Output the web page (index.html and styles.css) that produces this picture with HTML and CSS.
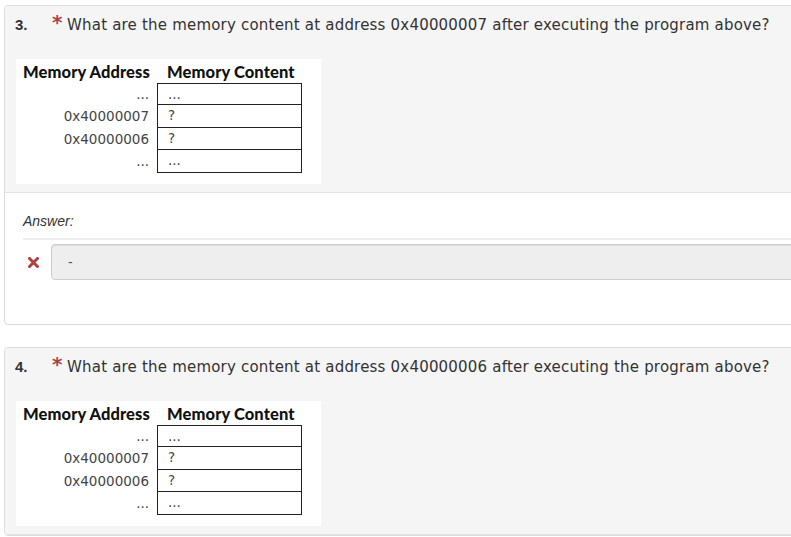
FILE: index.html
```html
<!DOCTYPE html>
<html>
<head>
<meta charset="utf-8">
<link rel="stylesheet" href="styles.css">
</head>
<body>
<div class="page">
  <div class="card">
    <div class="card-head">
      <div class="qline">
        <span class="qnum">3.</span>
        <span class="req">*</span>
        <span class="qtext">What are the memory content at address 0x40000007 after executing the program above?</span>
      </div>
      <div class="memfig">
        <div class="mh addr">Memory Address</div>
        <div class="mh cont">Memory Content</div>
        <div class="ma">...</div><div class="mc first">...</div>
        <div class="ma">0x40000007</div><div class="mc">?</div>
        <div class="ma">0x40000006</div><div class="mc">?</div>
        <div class="ma">...</div><div class="mc">...</div>
      </div>
    </div>
    <div class="card-body">
      <div class="answer-label">Answer:</div>
      <div class="answer-row">
        <span class="wrong"><svg width="11" height="11" viewBox="0 0 11 11"><path d="M1.5 1.5 L9.5 9.5 M9.5 1.5 L1.5 9.5" stroke="#b0413e" stroke-width="3" stroke-linecap="square"/></svg></span>
        <div class="answer-box">-</div>
      </div>
    </div>
  </div>

  <div class="card">
    <div class="card-head">
      <div class="qline">
        <span class="qnum">4.</span>
        <span class="req">*</span>
        <span class="qtext">What are the memory content at address 0x40000006 after executing the program above?</span>
      </div>
      <div class="memfig">
        <div class="mh addr">Memory Address</div>
        <div class="mh cont">Memory Content</div>
        <div class="ma">...</div><div class="mc first">...</div>
        <div class="ma">0x40000007</div><div class="mc">?</div>
        <div class="ma">0x40000006</div><div class="mc">?</div>
        <div class="ma">...</div><div class="mc">...</div>
      </div>
    </div>
  </div>
</div>
</body>
</html>
```

FILE: styles.css
```css
html, body {
  margin: 0;
  padding: 0;
  background: #fff;
  overflow: hidden;
}
.page {
  width: 791px;
  height: 537px;
  overflow: hidden;
  padding: 5px 0 0 4px;
  box-sizing: border-box;
}
.card {
  width: 820px;
  border: 1px solid #ddd;
  border-radius: 4px;
  background: #fff;
  margin-bottom: 22px;
  overflow: hidden;
}
.card-head {
  background: #f5f5f5;
  border-bottom: 1px solid #e3e3e3;
  padding: 5px 0 8px 10px;
}
.qline {
  display: flex;
  align-items: baseline;
  font-family: "DejaVu Sans", Verdana, sans-serif;
  font-size: 15px;
  color: #333;
  height: 24px;
}
.qnum {
  font-family: "Liberation Sans", Arial, sans-serif;
  font-weight: bold;
  font-size: 15px;
  width: 37px;
}
.req {
  color: #a94442;
  font-size: 20px;
  font-weight: bold;
  width: 15px;
  position: relative;
  top: -1px;
}
.qtext {
  letter-spacing: 0.2px;
}
.memfig {
  margin-top: 24px;
  margin-left: 1px;
  width: 305px;
  height: 125px;
  box-sizing: border-box;
  background: #fff;
  display: grid;
  grid-template-columns: 141px 145px;
  grid-template-rows: 24px 22px 23px 22px 23px;
  font-family: "DejaVu Sans", Tahoma, sans-serif;
  font-size: 13.5px;
  color: #444;
}
.mh {
  font-family: Lato, "Liberation Sans", sans-serif;
  font-weight: 900;
  font-size: 16.5px;
  color: #111;
  align-self: end;
  padding-bottom: 1px;
  white-space: nowrap;
}
.mh.addr {
  padding-left: 7px;
  letter-spacing: 0.1px;
}
.mh.cont {
  padding-left: 10px;
  letter-spacing: 0.1px;
}
.ma {
  text-align: right;
  padding-right: 8px;
  line-height: 22px;
}
.mc {
  border: 1.5px solid #222;
  border-top: none;
  padding-left: 10px;
  line-height: 21px;
}
.mc.first {
  border-top: 1.5px solid #222;
}
.card-body {
  padding: 20px 0 44px 18px;
}
.answer-label {
  font-family: "Liberation Sans", Arial, sans-serif;
  font-style: italic;
  font-size: 14px;
  color: #333;
  padding-bottom: 9px;
  border-bottom: 2px solid #eee;
  margin-bottom: 4px;
}
.answer-row {
  display: flex;
  align-items: center;
}
.wrong {
  width: 28px;
  padding-left: 5px;
  box-sizing: border-box;
  display: flex;
  align-items: center;
}
.answer-box {
  flex: 1;
  height: 36px;
  box-sizing: border-box;
  background: #eee;
  border: 1px solid #ccc;
  border-radius: 4px;
  box-shadow: inset 0 1px 1px rgba(0,0,0,0.075);
  font-family: "Liberation Sans", Arial, sans-serif;
  font-size: 14px;
  color: #555;
  padding: 8px 16px;
  line-height: 18px;
}
```
